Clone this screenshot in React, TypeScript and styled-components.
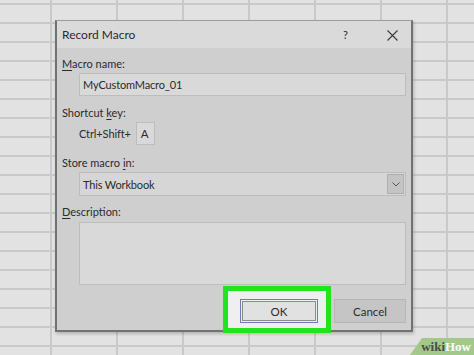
import styled, { createGlobalStyle } from 'styled-components';

const GlobalStyle = createGlobalStyle`
  html, body {
    margin: 0;
    padding: 0;
    background: #e4e4e4;
  }
  * {
    box-sizing: border-box;
  }
`

const Underlined = ({ text, at }: { text: string; at: number }) => (
  <>
    {text.slice(0, at)}
    <u>{text[at]}</u>
    {text.slice(at + 1)}
  </>
)

export default function App() {
  return (
    <Sheet>
      <GlobalStyle />
      <Dialog>
        <TitleBar>
          <Title>Record Macro</Title>
          <Help>?</Help>
          <Close>
            <svg width="11" height="11" viewBox="0 0 11 11">
              <path d="M0.5 0.5 L10.5 10.5 M10.5 0.5 L0.5 10.5" stroke="#3a3a3a" strokeWidth="1.1" fill="none" />
            </svg>
          </Close>
        </TitleBar>
        <Body>
          <Label $top={8}><Underlined text="Macro name:" at={0} /></Label>
          <TextInput>MyCustomMacro_01</TextInput>

          <Label $top={9}><Underlined text="Shortcut key:" at={9} /></Label>
          <ShortcutRow>
            <span>Ctrl+Shift+</span>
            <KeyBox>A</KeyBox>
          </ShortcutRow>

          <Label $top={10}><Underlined text="Store macro in:" at={12} /></Label>
          <Select>
            <span>This Workbook</span>
            <DropButton>
              <svg width="8" height="5" viewBox="0 0 8 5">
                <path d="M0.5 0.5 L4 4 L7.5 0.5" stroke="#555" strokeWidth="1" fill="none" />
              </svg>
            </DropButton>
          </Select>

          <Label $top={8}><Underlined text="Description:" at={0} /></Label>
          <TextArea />

          <ButtonRow>
            <Highlight>
              <OkButton>OK</OkButton>
            </Highlight>
            <CancelButton>Cancel</CancelButton>
          </ButtonRow>
        </Body>
      </Dialog>
      <Watermark>
        <WikiPart>wiki</WikiPart>
        <HowPart>How</HowPart>
      </Watermark>
    </Sheet>
  );
}

const Sheet = styled.div`
  position: relative;
  width: 474px;
  height: 355px;
  overflow: hidden;
  padding: 20px 0 0 55px;
  background-color: #e2e2e2;
  background-image:
    linear-gradient(to right, #c9c9c9 2px, transparent 2px),
    linear-gradient(to bottom, #c9c9c9 2px, transparent 2px);
  background-size: 66px 100%, 100% 19px;
  background-position: 50px 0, 0 3px;
  font-family: Lato, "Open Sans", sans-serif;
  color: #2b2b2b;
`
const Dialog = styled.div`
  width: 358px;
  height: 312px;
  display: flex;
  flex-direction: column;
  background: #cfcfcf;
  border: 1px solid #9c9c9c;
  border-left: 2px solid #727272;
  border-right: 2px solid #727272;
  border-bottom: 2px solid #727272;
  box-shadow: 1px 2px 3px rgba(0, 0, 0, 0.2);
`
const TitleBar = styled.div`
  height: 27px;
  flex: none;
  display: flex;
  align-items: center;
  padding-left: 5px;
  background: #dadada;
`
const Title = styled.div`
  font-size: 12px;
  flex: 1;
`
const Help = styled.div`
  font-size: 11px;
  width: 45px;
  padding-left: 1px;
`
const Close = styled.div`
  width: 24px;
  display: flex;
  align-items: center;
  padding-top: 1px;
`
const Body = styled.div`
  flex: 1;
  display: flex;
  flex-direction: column;
  padding: 0 5px 0 5px;
`
const Label = styled.div<{ $top: number }>`
  margin-top: ${p => p.$top}px;
  height: 16px;
  line-height: 16px;
  font-size: 11px;
  u {
    text-decoration-thickness: 1px;
    text-underline-offset: 2px;
  }
`
const Field = styled.div`
  margin: 1px 0 0 17px;
  border: 1px solid #bdbdbd;
  background: #d9d9d9;
  font-size: 11px;
  letter-spacing: -0.15px;
  display: flex;
  align-items: center;
`
const TextInput = styled(Field)`
  height: 23px;
  padding-left: 3px;
`
const ShortcutRow = styled.div`
  margin: 1px 0 0 17px;
  height: 23px;
  display: flex;
  align-items: center;
  gap: 5px;
  font-size: 11px;
  letter-spacing: -0.1px;
`
const KeyBox = styled.div`
  width: 19px;
  height: 23px;
  border: 1px solid #bdbdbd;
  background: #d9d9d9;
  font-size: 11.5px;
  padding-left: 4px;
  display: flex;
  align-items: center;
`
const Select = styled(Field)`
  height: 24px;
  padding: 0 1px 0 3px;
  justify-content: space-between;
  background: #d6d6d6;
`
const DropButton = styled.div`
  width: 17px;
  height: 20px;
  background: #c4c4c4;
  border: 1px solid #b0b0b0;
  display: flex;
  align-items: center;
  justify-content: center;
`
const TextArea = styled(Field)`
  margin-top: 2px;
  height: 63px;
`
const ButtonRow = styled.div`
  margin-top: 14px;
  display: flex;
  justify-content: flex-end;
  gap: 16px;
`
const Highlight = styled.div`
  border: 5px solid #20e41e;
  background: #efefef;
  padding: 8px 8px 5px 12px;
  margin: -13px -13px -10px -17px;
`
const Button = styled.div`
  height: 24px;
  display: flex;
  align-items: center;
  justify-content: center;
  font-size: 11.5px;
`
const OkButton = styled(Button)`
  width: 78px;
  background: #e1e1e1;
  border: 1px solid #6c7bb5;
  box-shadow: inset 0 0 0 1px #efefef, inset 0 0 0 2px #8c8c8c;
`
const CancelButton = styled(Button)`
  width: 72px;
  background: #c5c5c5;
  border: 1px solid #b6b6b6;
`
const Watermark = styled.div`
  position: absolute;
  right: 0;
  bottom: 0;
  width: 64px;
  height: 17px;
  background: #a3c98a;
  clip-path: polygon(12px 0, 100% 0, 100% 100%, 0 100%);
  display: flex;
  align-items: center;
  justify-content: flex-end;
  padding-right: 3px;
  font-family: "Liberation Serif", "DejaVu Serif", serif;
  font-weight: bold;
  font-size: 13px;
`
const WikiPart = styled.span`
  color: #4b4b4b;
`
const HowPart = styled.span`
  color: #ffffff;
`
